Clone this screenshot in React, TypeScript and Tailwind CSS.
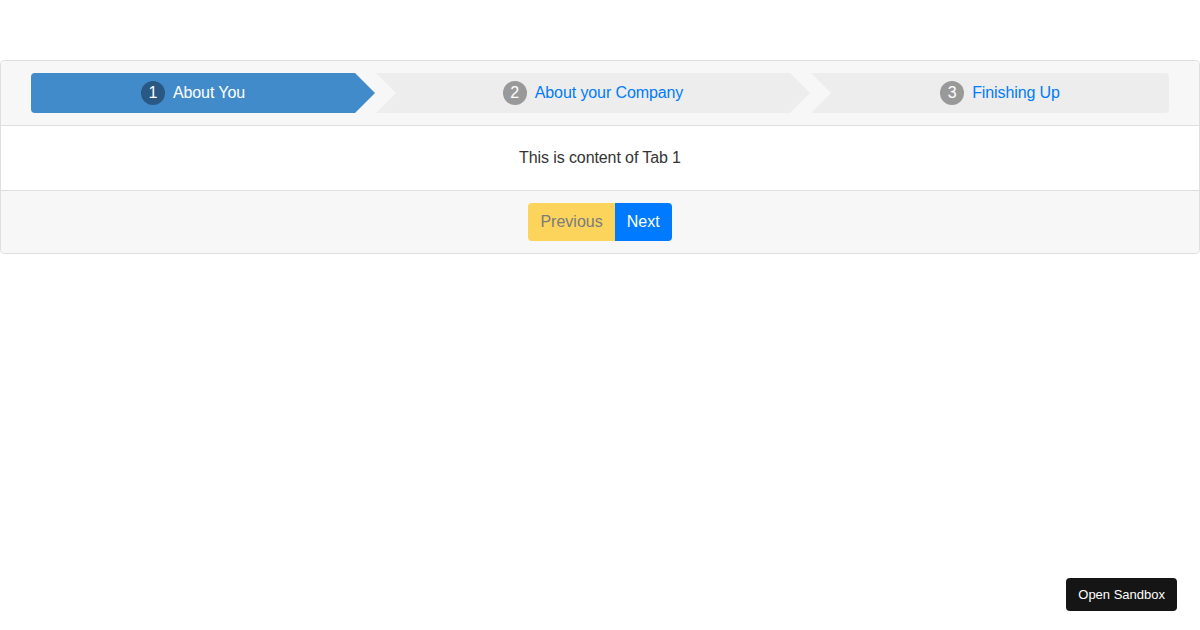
const steps = [
  { n: 1, label: "About You", width: "w-[344px]", shape: "[clip-path:polygon(0_0,calc(100%_-_20px)_0,100%_50%,calc(100%_-_20px)_100%,0_100%)]", pad: "pr-[20px]", active: true },
  { n: 2, label: "About your Company", width: "w-[434px]", shape: "[clip-path:polygon(0_0,calc(100%_-_20px)_0,100%_50%,calc(100%_-_20px)_100%,0_100%,20px_50%)]", pad: "px-[20px]", active: false },
  { n: 3, label: "Finishing Up", width: "w-[358px]", shape: "[clip-path:polygon(0_0,100%_0,100%_100%,0_100%,20px_50%)]", pad: "pl-[20px]", active: false },
];

function Step({ s }: { s: (typeof steps)[number] }) {
  return (
    <div
      className={`${s.width} ${s.shape} ${s.pad} h-[40px] flex items-center justify-center gap-2 ${
        s.active ? "bg-[#428bca] rounded-l" : "bg-[#ededed]"
      } ${s.n === 3 ? "rounded-r" : ""}`}
    >
      <span
        className={`w-6 h-6 rounded-full flex items-center justify-center text-white text-base ${
          s.active ? "bg-[#2a5884]" : "bg-[#999999]"
        }`}
      >
        {s.n}
      </span>
      <span className={`tracking-[-0.1px] ${s.active ? "text-white" : "text-[#007bff]"}`}>{s.label}</span>
    </div>
  );
}

export default function App() {
  return (
    <div className="min-h-screen bg-white pt-[60px] text-base text-[#333333] font-['Liberation_Sans',Arial,sans-serif]">
      <div className="border border-[#dfdfdf] rounded bg-white">
        <div className="bg-[#f7f7f7] px-[30px] py-3 border-b border-[#dfdfdf] rounded-t">
          <div className="flex gap-px">
            {steps.map((s) => (
              <Step key={s.n} s={s} />
            ))}
          </div>
        </div>
        <div className="py-5 text-center leading-6 tracking-[-0.1px]">This is content of Tab 1</div>
        <div className="bg-[#f7f7f7] border-t border-[#dfdfdf] py-3 flex justify-center rounded-b">
          <div className="flex">
            <button className="h-[38px] px-3 bg-[#fcd45b] text-[#7a7b7d] rounded-l">Previous</button>
            <button className="h-[38px] px-3 bg-[#007bff] text-white rounded-r">Next</button>
          </div>
        </div>
      </div>
      <button className="fixed right-[23px] bottom-[19px] h-[33px] px-3 bg-[#151515] text-white text-[13px] rounded">
        Open Sandbox
      </button>
    </div>
  );
}
